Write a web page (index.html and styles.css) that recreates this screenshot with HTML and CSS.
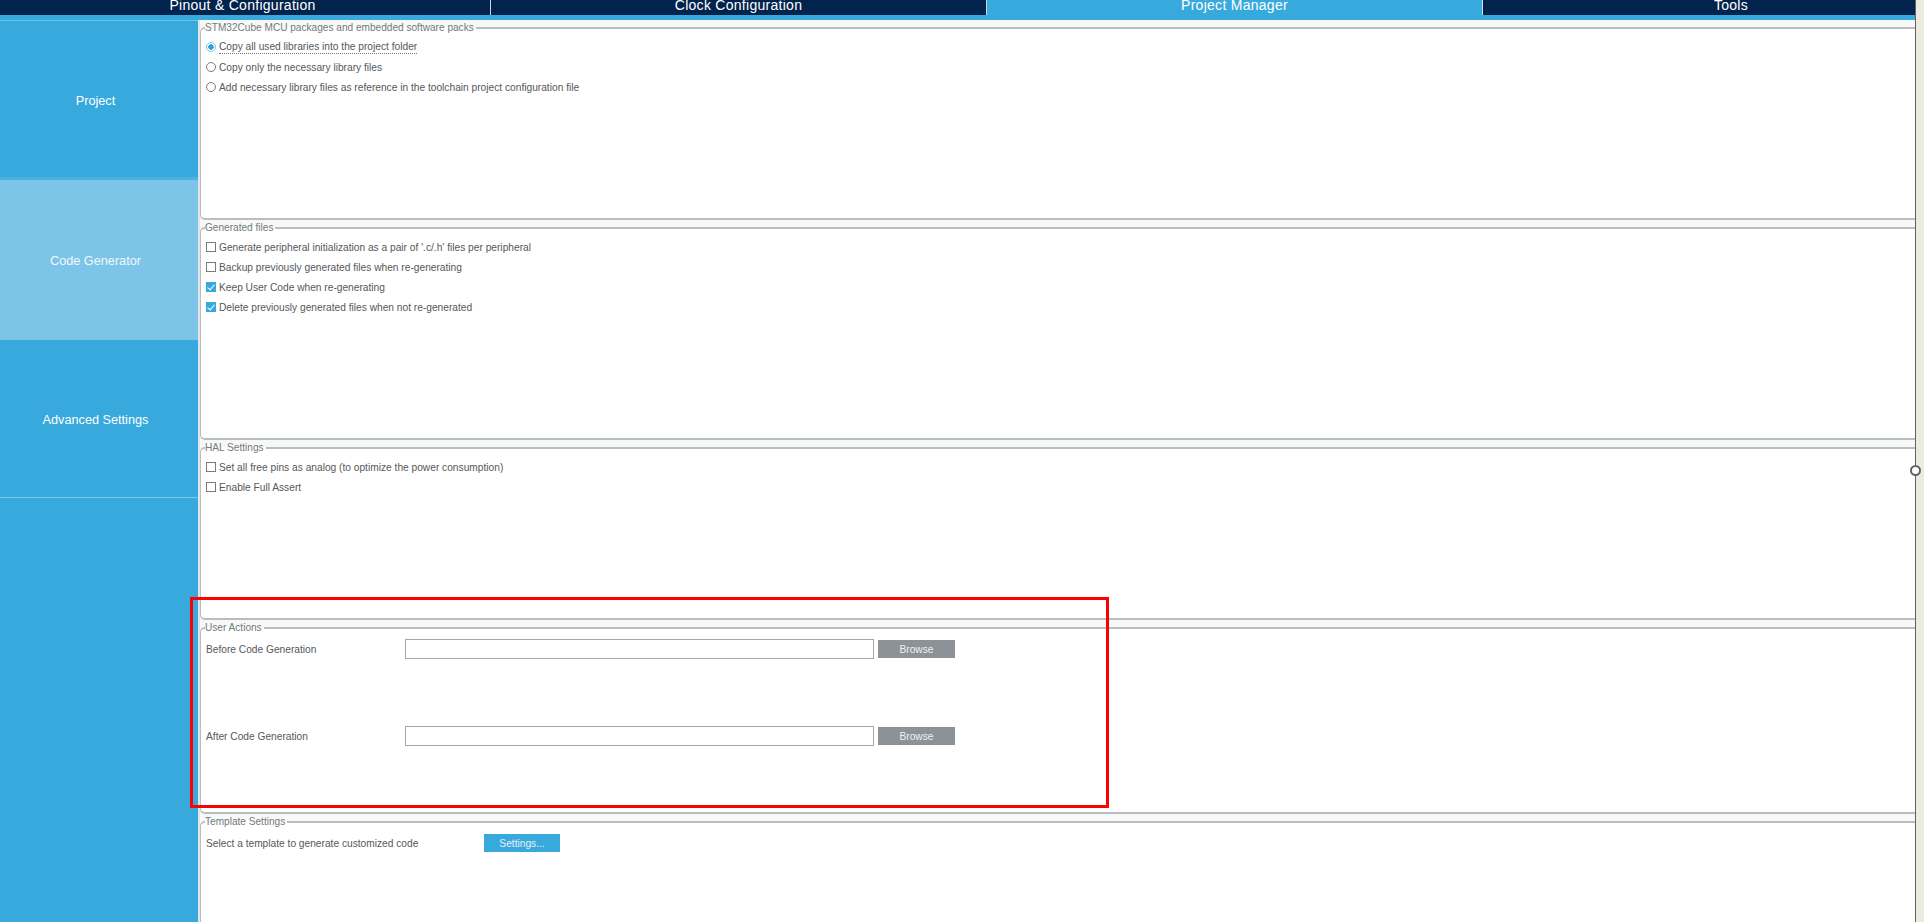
FILE: index.html
```html
<!DOCTYPE html>
<html lang="en">
<head>
<meta charset="utf-8">
<title>Project Manager</title>
<link rel="stylesheet" href="styles.css">
</head>
<body>
<div class="app">
  <nav class="tabs">
    <div class="tab">Pinout &amp; Configuration</div>
    <div class="tab">Clock Configuration</div>
    <div class="tab tab-active">Project Manager</div>
    <div class="tab tab-last">Tools</div>
  </nav>
  <div class="tab-rule"></div>
  <div class="main">
    <aside class="sidebar">
      <div class="side-item">Project</div>
      <div class="side-item side-active">Code Generator</div>
      <div class="side-item side-last">Advanced Settings</div>
    </aside>
    <section class="content">
      <fieldset class="group group-a">
        <legend>STM32Cube MCU packages and embedded software packs</legend>
        <label class="row"><input type="radio" name="pack" checked><span class="focused">Copy all used libraries into the project folder</span></label>
        <label class="row"><input type="radio" name="pack"><span>Copy only the necessary library files</span></label>
        <label class="row"><input type="radio" name="pack"><span>Add necessary library files as reference in the toolchain project configuration file</span></label>
      </fieldset>
      <fieldset class="group group-b">
        <legend>Generated files</legend>
        <label class="row"><input type="checkbox"><span>Generate peripheral initialization as a pair of '.c/.h' files per peripheral</span></label>
        <label class="row"><input type="checkbox"><span>Backup previously generated files when re-generating</span></label>
        <label class="row"><input type="checkbox" checked><span>Keep User Code when re-generating</span></label>
        <label class="row"><input type="checkbox" checked><span>Delete previously generated files when not re-generated</span></label>
      </fieldset>
      <fieldset class="group group-c">
        <legend>HAL Settings</legend>
        <label class="row"><input type="checkbox"><span>Set all free pins as analog (to optimize the power consumption)</span></label>
        <label class="row"><input type="checkbox"><span>Enable Full Assert</span></label>
      </fieldset>
      <fieldset class="group group-d">
        <legend>User Actions</legend>
        <div class="action action-first">
          <span class="action-label">Before Code Generation</span>
          <input class="path" type="text">
          <button class="btn btn-gray" type="button">Browse</button>
        </div>
        <div class="action">
          <span class="action-label">After Code Generation</span>
          <input class="path" type="text">
          <button class="btn btn-gray" type="button">Browse</button>
        </div>
      </fieldset>
      <fieldset class="group group-e">
        <legend>Template Settings</legend>
        <div class="template">
          <span class="template-label">Select a template to generate customized code</span>
          <button class="btn btn-blue" type="button">Settings...</button>
        </div>
      </fieldset>
    </section>
    <div class="splitter"><span class="knob"></span></div>
    <div class="gutter"></div>
  </div>
  <div class="highlight"></div>
</div>
</body>
</html>
```
FILE: styles.css
```css
* { box-sizing: border-box; }
html, body { margin: 0; height: 100%; overflow: hidden; }
body { font-family: "Liberation Sans", Arial, sans-serif; background: #fff; }

.app { position: relative; width: 1924px; height: 922px; display: flex; flex-direction: column; overflow: hidden; background: #ecebde; }

.tabs { display: flex; height: 15px; background: #02234c; flex: none; margin-right: 8px; overflow: hidden; border-right: 1px solid #5f6265; }
.tab { width: 496px; flex: none; color: #fff; font-size: 14px; line-height: 11px; text-align: center; border-right: 1px solid #c9d6e2; white-space: nowrap; letter-spacing: 0.28px; }
.tab:first-child { margin-left: -5px; }
.tab-active { background: #38a9dc; border-right-color: #c9e6f4; }
.tab-last { border-right: 0; }
.tab-rule { height: 5px; background: #38a9dc; flex: none; margin-right: 8px; border-right: 1px solid #5f6265; }

.main { flex: 1; display: flex; min-height: 0; }

.sidebar { width: 198px; flex: none; background: #38a9dc; border-top: 1px solid #6fc0e6; display: flex; flex-direction: column; }
.side-item { height: 160px; color: #fff; font-size: 12.7px; padding: 2px 7px 0 0; display: flex; align-items: center; justify-content: center; border-bottom: 1px solid #7cc5e8; }
.side-item:first-child { height: 159px; border-bottom: 3px solid #4cb1e0; padding-top: 4px; }
.side-active { background: #7cc5e8; color: #f2f8fb; border-bottom-color: #7cc5e8; }
.side-last { height: 158px; }

.content { flex: 1; min-width: 0; padding: 2px 0 0 2px; display: flex; flex-direction: column; gap: 2px; background: #f7f8f8; box-shadow: inset 2px 0 0 #e2e4e5; overflow: hidden; }

.group { margin: 0; padding: 3px 0 0 4px; border: 2px solid #b9bdbf; border-width: 2px 0 2px 1px; border-radius: 5px 0 0 5px; background: #fff; flex: none; min-width: 0; }
.group legend { padding: 0 2px 0 0; margin-left: 0; font-size: 10.1px; line-height: 12px; color: #74787b; }
.group-a { height: 198px; }
.group-b { height: 218px; }
.group-c { height: 178px; }
.group-d { height: 192px; }
.group-e { height: 130px; border-bottom: 0; border-radius: 5px 0 0 0; }

.row { display: flex; align-items: center; gap: 3px; height: 20px; font-size: 10.2px; color: #55585c; }
.row input { appearance: none; margin: 0 0 0 1px; width: 10px; height: 10px; flex: none; border: 1px solid #777b7e; background: #fff; position: relative; }
.row input[type="radio"] { border-radius: 50%; }
.row input[type="radio"]:checked { border-color: #7cc5e8; background: radial-gradient(circle, #2f9fd8 0 2.5px, #fff 3px); }
.row input[type="checkbox"]:checked { border-color: #38a9dc; background: #38a9dc; }
.row input[type="checkbox"]:checked::after { content: ""; position: absolute; left: 2px; top: 0; width: 3px; height: 6px; border: solid #fff; border-width: 0 1.5px 1.5px 0; transform: rotate(40deg); }
.focused { border-bottom: 1px dotted #777; line-height: 12px; }

.action { display: flex; align-items: center; height: 20px; font-size: 10.2px; color: #55585c; }
.action + .action { margin-top: 67px; }
.action-first { margin-top: 2px; }
.action-label { width: 200px; flex: none; padding-left: 1px; }
.path { width: 469px; height: 20px; margin: 0 4px 0 0; flex: none; border: 1px solid #a3a8ab; background: #fff; padding: 0; }
.btn { border: 0; padding: 0; height: 18px; width: 77px; color: #eef1f3; font: 10.2px "Liberation Sans", Arial, sans-serif; flex: none; }
.btn-gray { background: #8c9298; }
.btn-blue { background: #38a9dc; width: 76px; }

.template { display: flex; align-items: center; height: 18px; margin-top: 3px; font-size: 10.2px; color: #55585c; }
.template-label { width: 279px; flex: none; padding-left: 1px; }

.splitter { width: 1px; flex: none; background: #5f6265; position: relative; }
.knob { position: absolute; left: -5px; top: 445px; width: 11px; height: 11px; border: 2px solid #5f6265; border-radius: 50%; background: #fff; }
.gutter { width: 8px; flex: none; background: #ecebde; }

.highlight { position: absolute; left: 190px; top: 597px; width: 919px; height: 211px; border: 3px solid #fe0000; pointer-events: none; }
```
